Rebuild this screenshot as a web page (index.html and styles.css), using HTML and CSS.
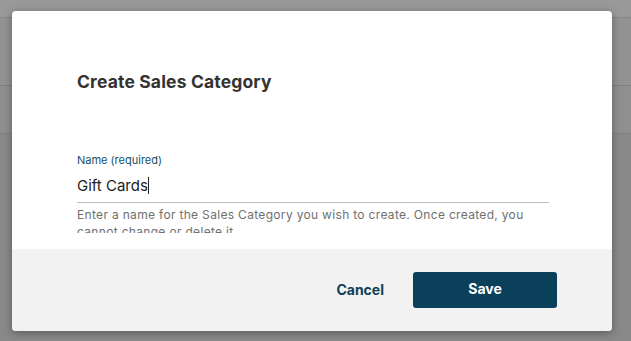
FILE: index.html
```html
<!DOCTYPE html>
<html>
<head>
<meta charset="utf-8">
<link rel="stylesheet" href="styles.css">
</head>
<body>
<div class="page">
  <div class="row row-top"></div>
  <div class="row row-a"></div>
  <div class="row row-b"></div>
  <div class="row row-c"></div>
</div>
<div class="modal">
  <div class="modal-body">
    <div class="scroll">
      <h1 class="title">Create Sales Category</h1>
      <div class="field">
        <label class="label">Name (required)</label>
        <div class="input"><span>Gift Cards</span><span class="caret"></span></div>
        <p class="help">Enter a name for the Sales Category you wish to create. Once created, you cannot change or delete it.</p>
      </div>
    </div>
  </div>
  <div class="modal-footer">
    <button class="btn-cancel">Cancel</button>
    <button class="btn-save">Save</button>
  </div>
</div>
</body>
</html>
```
FILE: styles.css
```css
html, body {
  margin: 0;
  padding: 0;
  height: 100%;
}
body {
  background: #8b8b8b;
  font-family: "Inter", "Liberation Sans", sans-serif;
  overflow: hidden;
}
.page {
  display: flex;
  flex-direction: column;
}
.row-top {
  height: 17px;
  background: #999999;
  border-bottom: 1px solid #858585;
}
.row-a {
  height: 67px;
  background: #929292;
  border-bottom: 1px solid #7f7f7f;
}
.row-b {
  height: 47px;
  background: #8f8f8f;
  border-bottom: 1px solid #808080;
}
.row-c {
  height: 210px;
  background: #898989;
}
.modal {
  position: absolute;
  left: 12px;
  top: 11px;
  width: 600px;
  height: 320px;
  background: #ffffff;
  border-radius: 4px;
  box-shadow: 0 2px 8px rgba(0,0,0,0.35);
  display: flex;
  flex-direction: column;
  overflow: hidden;
}
.modal-body {
  height: 238px;
  flex: none;
  padding: 0 63px 0 65px;
  box-sizing: border-box;
}
.scroll {
  height: 222px;
  overflow: hidden;
}
.title {
  margin: 0;
  padding-top: 59px;
  font-size: 17.5px;
  font-weight: 700;
  color: #333333;
  line-height: 24px;
  letter-spacing: 0.15px;
}
.field {
  margin-top: 59px;
}
.label {
  display: block;
  font-size: 11px;
  line-height: 14px;
  color: #14506b;
}
.input {
  margin-top: 10px;
  height: 25px;
  border-bottom: 1px solid #bdbdbd;
  font-size: 15px;
  line-height: 18px;
  color: #222222;
  display: flex;
  align-items: flex-start;
}
.caret {
  display: inline-block;
  width: 1px;
  height: 17px;
  background: #222;
  margin-left: 0;
}
.help {
  margin: 3px 0 0;
  font-size: 12px;
  line-height: 17px;
  color: #707070;
  max-width: 470px;
  letter-spacing: 0.32px;
}
.modal-footer {
  flex: 1;
  background: #f2f2f2;
  display: flex;
  justify-content: flex-end;
  align-items: center;
  padding: 0 55px 0 0;
  gap: 29px;
}
.btn-cancel {
  background: none;
  border: none;
  padding: 0;
  font-family: inherit;
  font-size: 14px;
  font-weight: 700;
  color: #0e3f57;
  margin-top: -2px;
}
.btn-save {
  width: 144px;
  height: 36px;
  background: #0b405a;
  border: none;
  border-radius: 3px;
  color: #ffffff;
  font-family: inherit;
  font-size: 14px;
  font-weight: 700;
  padding: 0 0 4px;
}
```
